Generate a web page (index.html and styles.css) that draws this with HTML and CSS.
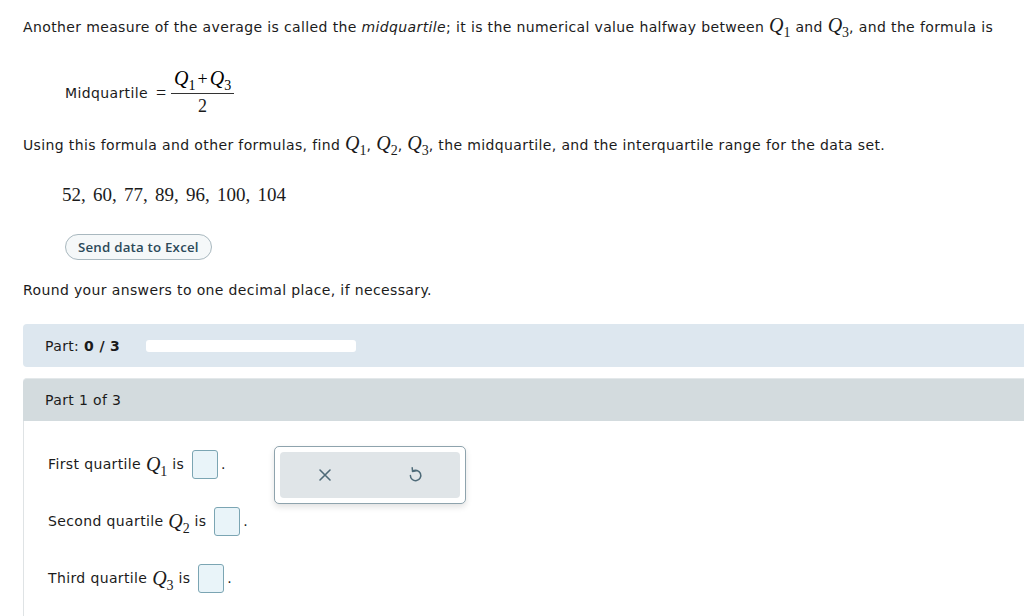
FILE: index.html
```html
<!DOCTYPE html>
<html>
<head>
<meta charset="utf-8">
<link rel="stylesheet" href="styles.css">
</head>
<body>
<div class="page">
  <p class="text intro">Another measure of the average is called the <i>midquartile</i>; it is the numerical value halfway between <span class="q">Q<sub>1</sub></span> and <span class="q">Q<sub>3</sub></span>, and the formula is</p>

  <div class="formula">
    <span class="text">Midquartile</span>
    <span class="eq">=</span>
    <span class="frac">
      <span class="num"><span class="q">Q<sub>1</sub></span><span class="plus">+</span><span class="q">Q<sub>3</sub></span></span>
      <span class="den">2</span>
    </span>
  </div>

  <p class="text using">Using this formula and other formulas, find <span class="q">Q<sub>1</sub></span>, <span class="q">Q<sub>2</sub></span>, <span class="q">Q<sub>3</sub></span>, the midquartile, and the interquartile range for the data set.</p>

  <div class="data">52, 60, 77, 89, 96, 100, 104</div>

  <button class="excel">Send data to Excel</button>

  <p class="text round">Round your answers to one decimal place, if necessary.</p>

  <div class="progress">
    <span class="text">Part: <b>0 / 3</b></span>
    <span class="bar"></span>
  </div>

  <div class="part">
    <div class="part-head text">Part 1 of 3</div>
    <div class="part-body">
      <div class="answers">
        <div class="row text">First quartile <span class="q">Q<sub>1</sub></span> is <span class="box"></span>.</div>
        <div class="row text">Second quartile <span class="q">Q<sub>2</sub></span> is <span class="box"></span>.</div>
        <div class="row text">Third quartile <span class="q">Q<sub>3</sub></span> is <span class="box"></span>.</div>
      </div>
      <div class="tools">
        <div class="tools-inner">
          <svg class="icon" width="16" height="16" viewBox="0 0 16 16"><path d="M3 3 L13 13 M13 3 L3 13" stroke="#4e6a78" stroke-width="1.6" fill="none" stroke-linecap="round"/></svg>
          <svg class="icon" width="16" height="16" viewBox="0 0 16 16"><path d="M5.6 4.2 A5.2 5.2 0 1 1 3.4 8.4" stroke="#4e6a78" stroke-width="1.5" fill="none" stroke-linecap="round"/><path d="M5.2 0.8 L5.6 4.4 L9.1 3.8" stroke="#4e6a78" stroke-width="1.5" fill="none" stroke-linecap="round" stroke-linejoin="round"/></svg>
        </div>
      </div>
    </div>
  </div>
</div>
</body>
</html>
```

FILE: styles.css
```css
html, body {
  margin: 0;
  padding: 0;
  background: #ffffff;
  overflow: hidden;
}
.page {
  width: 1001px;
  padding: 15px 0 0 23px;
}
.text {
  font-family: "DejaVu Sans", Verdana, sans-serif;
  font-size: 14px;
  letter-spacing: 0.37px;
  color: #1b1b1b;
}
p {
  margin: 0;
}
.intro {
  line-height: 22px;
}
.q {
  font-family: "Liberation Serif", "Times New Roman", serif;
  font-style: italic;
  font-size: 20px;
  letter-spacing: 0;
  line-height: 1;
}
.q sub {
  font-style: normal;
  font-size: 14px;
  vertical-align: -5px;
  line-height: 0;
}
.formula {
  display: flex;
  align-items: center;
  margin: 29px 0 0 42px;
  height: 52px;
}
.eq {
  font-family: "Liberation Serif", serif;
  font-size: 18px;
  color: #1b1b1b;
  margin: 0 5px 0 8px;
}
.frac {
  display: inline-flex;
  flex-direction: column;
  align-items: center;
}
.num {
  padding: 0 3px 3px;
  border-bottom: 1px solid #333;
  display: flex;
  align-items: baseline;
}
.plus {
  font-family: "Liberation Serif", serif;
  font-size: 18px;
  margin: 0 2px;
}
.den {
  font-family: "Liberation Serif", serif;
  font-size: 18px;
  line-height: 24px;
  color: #1b1b1b;
}
.using {
  margin-top: 14px;
  line-height: 22px;
}
.data {
  font-family: "Liberation Serif", "Times New Roman", serif;
  font-size: 19px;
  word-spacing: 2.5px;
  color: #1b1b1b;
  margin: 28px 0 0 39px;
  line-height: 22px;
}
.excel {
  display: block;
  margin: 28px 0 0 42px;
  height: 26px;
  padding: 0 12px;
  border: 1px solid #a9b8bf;
  border-radius: 13px;
  background: #f5f8f9;
  font-family: "Open Sans", sans-serif;
  font-weight: 600;
  font-size: 13.3px;
  letter-spacing: 0.2px;
  color: #2d4a5a;
}
.round {
  margin-top: 19px;
  line-height: 22px;
}
.progress {
  margin-top: 23px;
  height: 43px;
  background: #dde7ef;
  border-radius: 4px 0 0 4px;
  display: flex;
  align-items: center;
  padding-left: 22px;
  gap: 26px;
}
.bar {
  width: 210px;
  height: 12px;
  background: #ffffff;
  border-radius: 3px;
}
.part {
  margin-top: 11px;
}
.part-head {
  height: 43px;
  background: #d3dbde;
  border-top: 1px solid #e3e8ea;
  border-radius: 4px 0 0 0;
  display: flex;
  align-items: center;
  padding-left: 22px;
  box-sizing: border-box;
}
.part-body {
  border-left: 1px solid #dfe3e5;
  height: 200px;
  display: flex;
  padding: 25px 0 0 24px;
  align-items: flex-start;
}
.answers {
  width: 226px;
  margin-top: 3px;
  display: flex;
  flex-direction: column;
  gap: 27px;
}
.row {
  display: flex;
  align-items: center;
  height: 30px;
  white-space: pre;
}
.box {
  display: inline-block;
  width: 26px;
  height: 29px;
  box-sizing: border-box;
  border: 1px solid #7ba5b3;
  border-radius: 3px;
  background: #e9f4f9;
  margin: 0 3px 0 3px;
}
.tools {
  width: 192px;
  height: 58px;
  border: 1px solid #8ea3ad;
  border-radius: 5px;
  box-shadow: 0 3px 6px rgba(0,0,0,0.12);
  padding: 5px;
  box-sizing: border-box;
  background: #fff;
}
.tools-inner {
  height: 100%;
  background: #e0e5e8;
  border-radius: 4px;
  display: flex;
  align-items: center;
  justify-content: space-around;
}
```
